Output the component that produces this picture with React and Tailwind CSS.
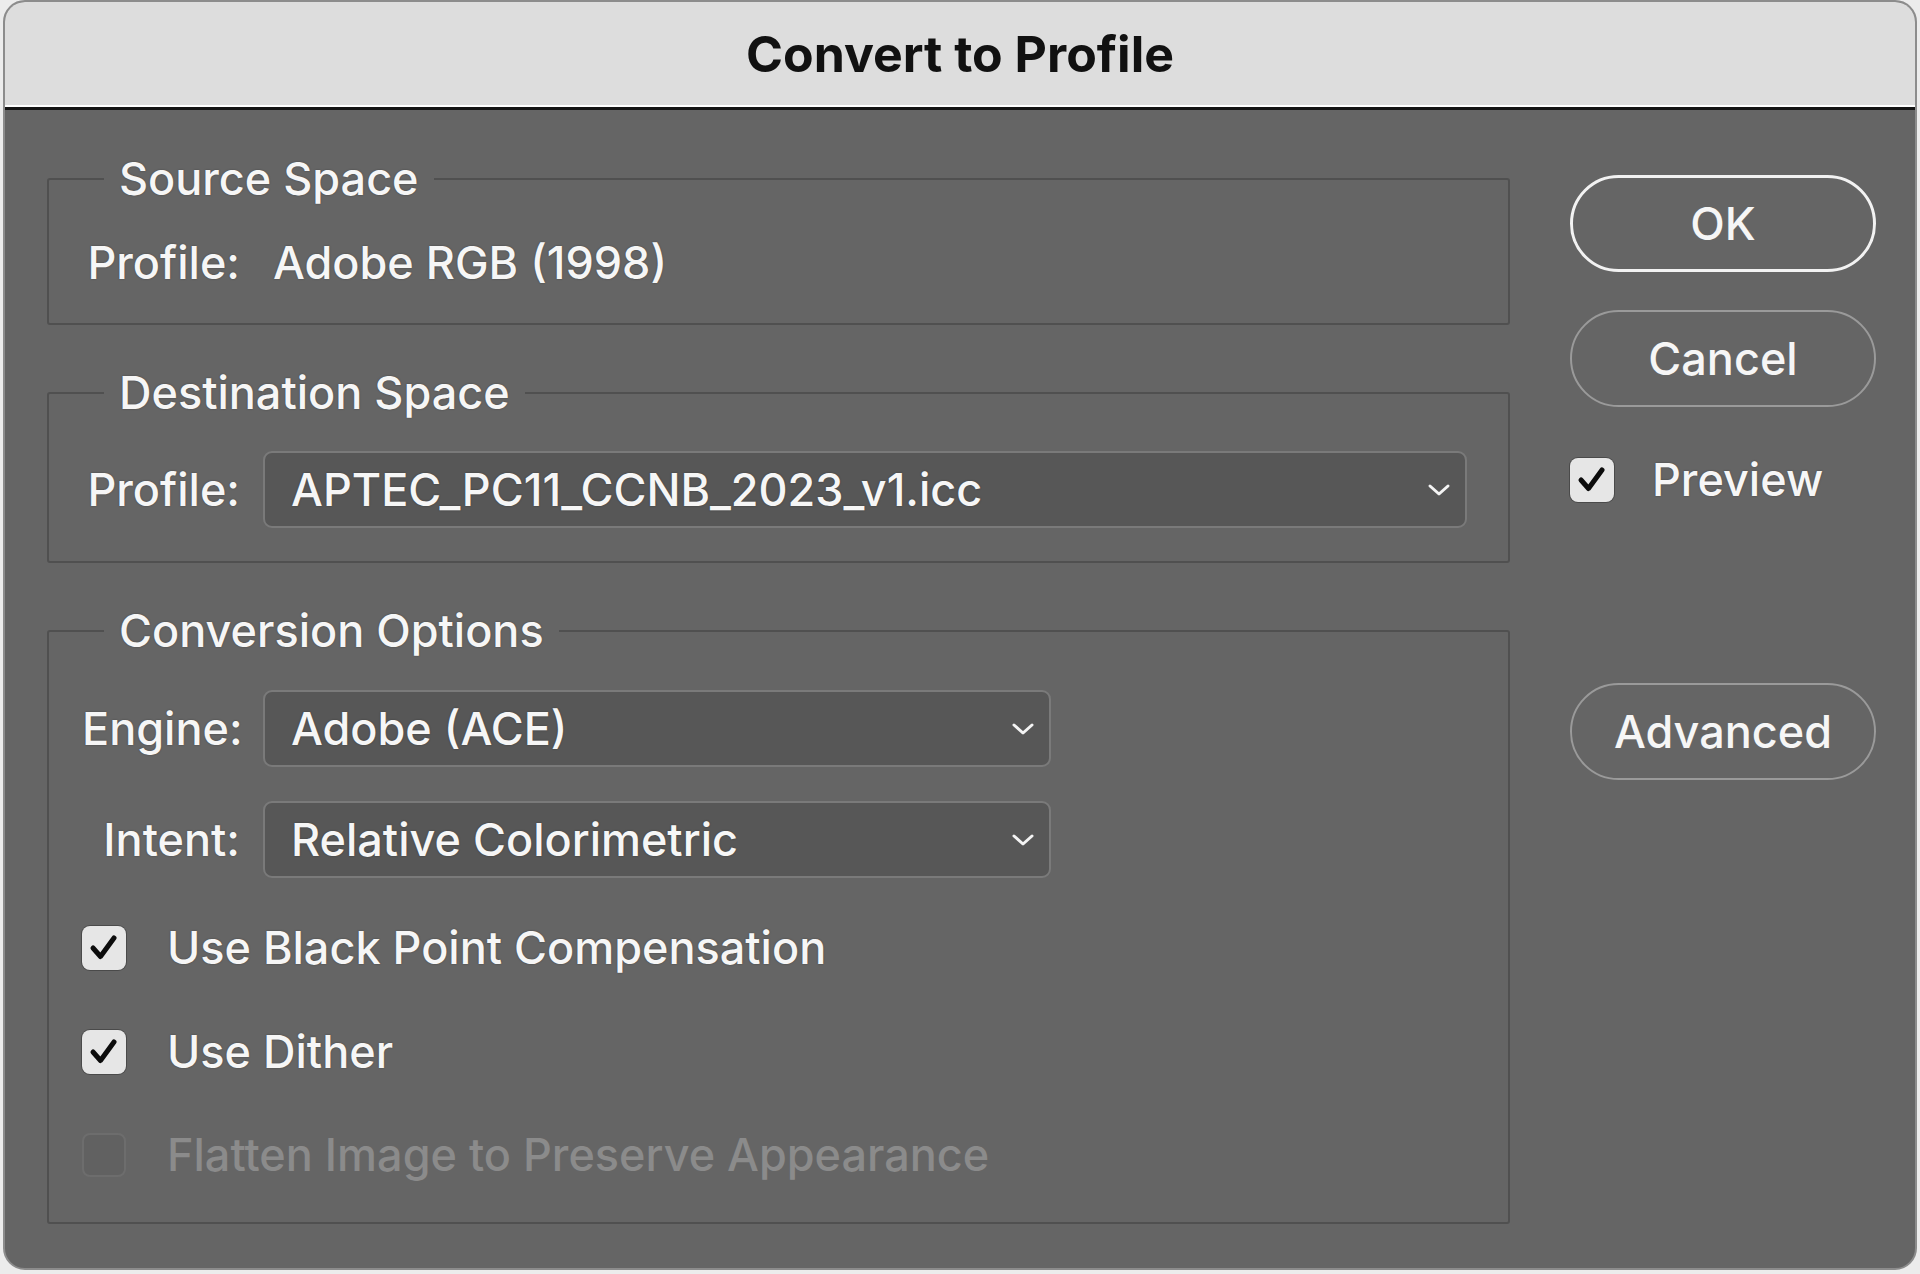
import React from 'react'

function Chevron() {
  return (
    <svg width="26" height="16" viewBox="0 0 26 16" fill="none">
      <path d="M4 4l9 8 9-8" stroke="#f4f4f4" strokeWidth="3" strokeLinecap="round" strokeLinejoin="round" />
    </svg>
  )
}

function Checkbox({ checked, disabled }) {
  return (
    <span
      className={`flex h-[44px] w-[44px] shrink-0 items-center justify-center rounded-[8px] ${
        disabled ? 'border-2 border-[#6d6d6d] bg-[#616161]' : 'bg-[#e6e6e6] shadow-[0_0_0_1px_#4a4a4a]'
      }`}
    >
      {checked && (
        <svg width="44" height="44" viewBox="0 0 44 44" fill="none">
          <path d="M11 22l7.5 8.5L32 12" stroke="#0c0c0c" strokeWidth="5" strokeLinecap="round" strokeLinejoin="round" />
        </svg>
      )}
    </span>
  )
}

function Select({ value, width }) {
  return (
    <div
      className={`flex h-[77px] items-center justify-between rounded-[9px] border-2 border-[#7a7a7a] bg-[#575757] pl-[26px] pr-[13px] ${width}`}
    >
      <span>{value}</span>
      <Chevron />
    </div>
  )
}

function Group({ title, children, className }) {
  return (
    <fieldset className={`rounded-[3px] border-2 border-[#505050] px-[33px] ${className}`}>
      <legend className="ml-[22px] px-[15px] leading-[56px]">{title}</legend>
      {children}
    </fieldset>
  )
}

function Label({ children }) {
  return <span className="w-[158px] shrink-0 text-right">{children}</span>
}

function CheckRow({ label, checked, disabled, className }) {
  return (
    <div className={`flex h-[56px] items-center gap-[41px] ${className}`}>
      <Checkbox checked={checked} disabled={disabled} />
      <span className={disabled ? 'text-[#8b8b8b] [text-shadow:none]' : ''}>{label}</span>
    </div>
  )
}

function PillButton({ children, primary, className }) {
  return (
    <button
      className={`flex h-[97px] w-[306px] items-center justify-center rounded-full ${
        primary ? 'border-[3px] border-[#f2f2f2]' : 'border-2 border-[#9a9a9a]'
      } ${className}`}
    >
      {children}
    </button>
  )
}

export default function App() {
  return (
    <div className="h-[1274px] w-[1920px] bg-[#ececec] px-[3px] font-['Inter','Liberation_Sans',sans-serif]">
      <div className="flex h-[1270px] flex-col overflow-hidden rounded-[22px] border-2 border-[#8c8c8c] bg-[#656565] text-[45px] font-medium text-[#f6f6f6] [text-shadow:0_0_2px_rgba(0,0,0,0.35)]">
        {/* Title bar */}
        <div className="flex h-[108px] shrink-0 items-center justify-center border-b-[3px] border-[#141414] bg-[#dddddd] shadow-[inset_0_-2px_0_#ffffff] [text-shadow:none]">
          <h1 className="text-[50px] font-bold text-[#111111]">Convert to Profile</h1>
        </div>

        <div className="flex flex-1 pl-[42px] pr-[35px] pt-[41px]">
          {/* Left column */}
          <div className="flex w-[1463px] flex-col gap-[40px]">
            <Group title="Source Space" className="pb-[32px] pt-[28px]">
              <div className="flex h-[56px] items-center">
                <Label>Profile:</Label>
                <span className="ml-[33px]">Adobe RGB (1998)</span>
              </div>
            </Group>

            <Group title="Destination Space" className="pb-[33px] pt-[30px]">
              <div className="flex items-center gap-[23px]">
                <Label>Profile:</Label>
                <Select value="APTEC_PC11_CCNB_2023_v1.icc" width="w-[1204px]" />
              </div>
            </Group>

            <Group title="Conversion Options" className="pb-[39px] pt-[31px]">
              <div className="flex items-center gap-[23px]">
                <Label>Engine:</Label>
                <Select value="Adobe (ACE)" width="w-[788px]" />
              </div>
              <div className="mt-[34px] flex items-center gap-[23px]">
                <Label>Intent:</Label>
                <Select value="Relative Colorimetric" width="w-[788px]" />
              </div>
              <CheckRow label="Use Black Point Compensation" checked className="mt-[42px]" />
              <CheckRow label="Use Dither" checked className="mt-[48px]" />
              <CheckRow label="Flatten Image to Preserve Appearance" disabled className="mt-[47px]" />
            </Group>
          </div>

          {/* Right column */}
          <div className="ml-[60px] flex w-[306px] flex-col pt-[24px]">
            <PillButton primary>OK</PillButton>
            <PillButton className="mt-[38px]">Cancel</PillButton>
            <div className="mt-[45px] flex h-[56px] items-center gap-[38px]">
              <Checkbox checked />
              <span>Preview</span>
            </div>
            <PillButton className="mt-[175px]">Advanced</PillButton>
          </div>
        </div>
      </div>
    </div>
  )
}
